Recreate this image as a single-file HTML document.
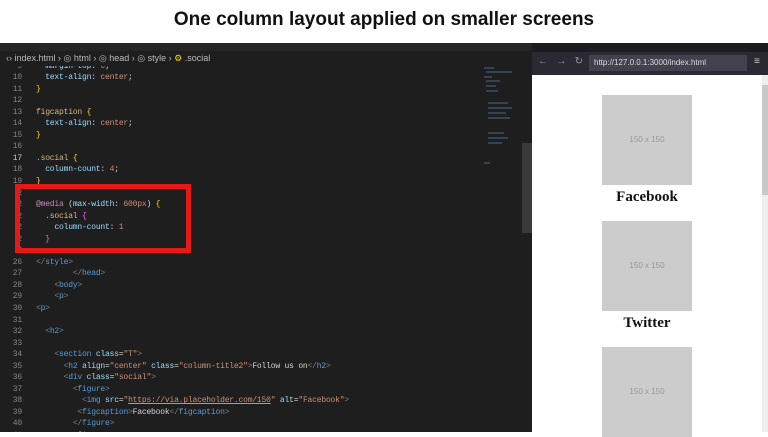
<!DOCTYPE html>
<html><head><meta charset="utf-8"><style>
*{margin:0;padding:0;box-sizing:border-box}
body{width:768px;height:432px;overflow:hidden;background:#fff;position:relative;font-family:"Liberation Sans",sans-serif}
.title{position:absolute;top:9px;left:0;width:768px;text-align:center;font-weight:bold;font-size:19px;color:#111}
.ed{position:absolute;top:43px;left:0;width:532px;height:389px;background:#1e1e1e;overflow:hidden}
.tabbar{position:absolute;top:0;left:0;width:532px;height:8px;background:#252526}
.crumb{position:absolute;top:10px;left:6px;font-size:9px;color:#bbb;white-space:nowrap}
.code{position:absolute;left:0;top:17.5px;width:532px;font-family:"Liberation Mono",monospace;font-size:8px;letter-spacing:-0.2px;color:#d4d4d4}
.ln{position:absolute;left:0;width:22px;text-align:right;color:#858585}
.l{height:11.55px;line-height:11.55px;position:relative}
.tx{position:absolute;left:36px;white-space:pre}
.y{color:#ffd700}.k{color:#d7ba7d}.p{color:#9cdcfe}.v{color:#ce9178}.t{color:#569cd6}.g{color:#808080}.m{color:#c586c0}.b{color:#da70d6}
.red{position:absolute;left:15px;top:141px;width:176px;height:69px;border:5px solid #e81818}
.mini{position:absolute;left:480px;top:20px;width:40px;height:210px}
.br{position:absolute;left:532px;top:43px;width:236px;height:389px;background:#fff}
.btab{position:absolute;top:0;left:0;width:236px;height:9px;background:#1c1b22}
.nav{position:absolute;top:9px;left:0;width:236px;height:23px;background:#2b2a33}
.url{position:absolute;left:57px;top:3px;width:158px;height:16px;background:#42414d;color:#ddd;font-size:8px;line-height:16px;padding-left:5px}
.ph{position:absolute;left:70px;width:90px;height:90px;background:#ccc;color:#999;font-size:8px;text-align:center;line-height:90px}
.cap{position:absolute;left:40px;width:150px;text-align:center;font-family:"Liberation Serif",serif;font-weight:bold;font-size:15px;color:#111}
.sb{position:absolute;right:0;top:32px;width:6px;height:357px;background:#eee}
</style></head><body>
<div class="title">One column layout applied on smaller screens</div>
<div class="ed">
<div class="tabbar"></div>
<div class="code"><div class="l"><span class="ln">9</span><span class="tx">  <span class="p">margin-top</span>: <span class="v">0</span>;</span></div><div class="l"><span class="ln">10</span><span class="tx">  <span class="p">text-align</span>: <span class="v">center</span>;</span></div><div class="l"><span class="ln">11</span><span class="tx"><span class="y">}</span></span></div><div class="l"><span class="ln">12</span></div><div class="l"><span class="ln">13</span><span class="tx"><span class="k">figcaption</span> <span class="y">{</span></span></div><div class="l"><span class="ln">14</span><span class="tx">  <span class="p">text-align</span>: <span class="v">center</span>;</span></div><div class="l"><span class="ln">15</span><span class="tx"><span class="y">}</span></span></div><div class="l"><span class="ln">16</span></div><div class="l"><span class="ln" style="color:#ccc">17</span><span class="tx"><span class="k">.social</span> <span class="y">{</span></span></div><div class="l"><span class="ln">18</span><span class="tx">  <span class="p">column-count</span>: <span class="v">4</span>;</span></div><div class="l"><span class="ln">19</span><span class="tx"><span class="y">}</span></span></div><div class="l"><span class="ln">2</span></div><div class="l"><span class="ln">2</span><span class="tx"><span class="m">@media</span> (<span class="p">max-width</span>: <span class="v">600px</span>) <span class="y">{</span></span></div><div class="l"><span class="ln">2</span><span class="tx">  <span class="k">.social</span> <span class="b">{</span></span></div><div class="l"><span class="ln">2</span><span class="tx">    <span class="p">column-count</span>: <span class="v">1</span></span></div><div class="l"><span class="ln">2</span><span class="tx">  <span class="b">}</span></span></div><div class="l"><span class="ln">2</span></div><div class="l"><span class="ln">26</span><span class="tx"><span class="g">&lt;/</span><span class="t">style</span><span class="g">&gt;</span></span></div><div class="l"><span class="ln">27</span><span class="tx">        <span class="g">&lt;/</span><span class="t">head</span><span class="g">&gt;</span></span></div><div class="l"><span class="ln">28</span><span class="tx">    <span class="g">&lt;</span><span class="t">body</span><span class="g">&gt;</span></span></div><div class="l"><span class="ln">29</span><span class="tx">    <span class="g">&lt;</span><span class="t">p</span><span class="g">&gt;</span></span></div><div class="l"><span class="ln">30</span><span class="tx"><span class="g">&lt;</span><span class="t">p</span><span class="g">&gt;</span></span></div><div class="l"><span class="ln">31</span></div><div class="l"><span class="ln">32</span><span class="tx">  <span class="g">&lt;</span><span class="t">h2</span><span class="g">&gt;</span></span></div><div class="l"><span class="ln">33</span></div><div class="l"><span class="ln">34</span><span class="tx">    <span class="g">&lt;</span><span class="t">section</span> <span class="p">class</span>=<span class="v">"T"</span><span class="g">&gt;</span></span></div><div class="l"><span class="ln">35</span><span class="tx">      <span class="g">&lt;</span><span class="t">h2</span> <span class="p">align</span>=<span class="v">"center"</span> <span class="p">class</span>=<span class="v">"column-title2"</span><span class="g">&gt;</span>Follow us on<span class="g">&lt;/</span><span class="t">h2</span><span class="g">&gt;</span></span></div><div class="l"><span class="ln">36</span><span class="tx">      <span class="g">&lt;</span><span class="t">div</span> <span class="p">class</span>=<span class="v">"social"</span><span class="g">&gt;</span></span></div><div class="l"><span class="ln">37</span><span class="tx">        <span class="g">&lt;</span><span class="t">figure</span><span class="g">&gt;</span></span></div><div class="l"><span class="ln">38</span><span class="tx">          <span class="g">&lt;</span><span class="t">img</span> <span class="p">src</span>=<span class="v">"<u>https://via.placeholder.com/150</u>"</span> <span class="p">alt</span>=<span class="v">"Facebook"</span><span class="g">&gt;</span></span></div><div class="l"><span class="ln">39</span><span class="tx">         <span class="g">&lt;</span><span class="t">figcaption</span><span class="g">&gt;</span>Facebook<span class="g">&lt;/</span><span class="t">figcaption</span><span class="g">&gt;</span></span></div><div class="l"><span class="ln">40</span><span class="tx">        <span class="g">&lt;/</span><span class="t">figure</span><span class="g">&gt;</span></span></div><div class="l"><span class="ln">41</span><span class="tx">        <span class="g">&lt;</span><span class="t">figure</span><span class="g">&gt;</span></span></div></div>
<div style="position:absolute;top:8px;left:0;width:532px;height:15px;background:#1e1e1e"></div>
<div class="crumb">‹› index.html › ◎ html › ◎ head › ◎ style › <span class="y">⚙</span> .social</div>
<svg class="mini" viewBox="0 0 40 210"><g stroke="#4a6a8a" stroke-width="1"><path d="M4 5h10M6 9h26M4 14h8M6 18h14M6 23h10M6 28h12M8 40h20M8 45h24M8 50h18M8 55h22M8 70h16M8 75h20M8 80h14M4 100h6"/></g></svg>
<div style="position:absolute;left:522px;top:100px;width:10px;height:90px;background:#3a3a3a"></div>
<div class="red"></div>
</div>
<div class="br">
<div class="btab"></div>
<div class="nav"><span style="position:absolute;left:6px;top:4px;color:#999;font-size:10px">←&nbsp;&nbsp;&nbsp;→&nbsp;&nbsp;&nbsp;↻</span><div class="url">http://127.0.0.1:3000/index.html</div><span style="position:absolute;left:222px;top:4px;color:#ccc;font-size:10px">≡</span></div>
<div class="ph" style="top:52px">150 x 150</div>
<div class="cap" style="top:146px">Facebook</div>
<div class="ph" style="top:178px">150 x 150</div>
<div class="cap" style="top:272px">Twitter</div>
<div class="ph" style="top:304px">150 x 150</div>
<div class="sb"><div style="margin-top:10px;height:110px;background:#c8c8c8"></div></div>
</div>
</body></html>
